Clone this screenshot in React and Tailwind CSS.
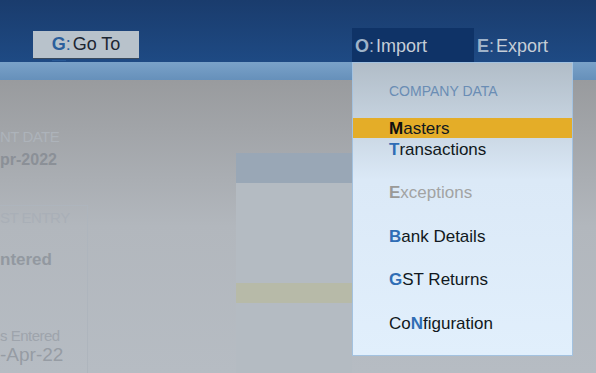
import React from 'react';

const font = { fontFamily: '"Liberation Sans", Arial, sans-serif' };

const Key = ({ k, label, keyClass, labelClass }) => (
    <span className="flex items-baseline">
        <span className={`relative font-bold ${keyClass}`}>
            {k}
            <span className="absolute left-0 right-0 -bottom-[3px] h-px bg-current opacity-70" />
        </span>
        <span className={`${keyClass} mr-[2px]`}>:</span>
        <span className={labelClass}>{label}</span>
    </span>
);

const MenuItem = ({ first, rest, pre, firstClass = 'text-[#2f6db5]', textClass = 'text-[#101820]', active, className = '' }) => (
    <div className={`h-[20px] flex items-center pl-[36px] text-[17px] leading-none ${active ? 'bg-[#e4ad28]' : ''} ${className}`}>
        <span className={textClass}>{pre}</span>
        <span className={`font-bold ${firstClass}`}>{first}</span>
        <span className={textClass}>{rest}</span>
    </div>
);

export default function App() {
    return (
        <div className="relative w-[596px] h-[373px] overflow-hidden flex flex-col" style={font}>
            {/* Top bar */}
            <div className="h-[62px] shrink-0 bg-gradient-to-b from-[#1a3c6d] to-[#1e4a84] flex items-end">
                <div className="ml-[33px] mb-[3px] w-[106px] h-[28px] bg-[#b8c2cb] border-b border-[#3a4a5c] flex items-center justify-center text-[18px]">
                    <Key k="G" label="Go To" keyClass="text-[#2c5f9c]" labelClass="text-[#1c2632]" />
                </div>
                <div className="ml-auto mr-[25px] flex items-end">
                    <div className="w-[122px] h-[34px] bg-[#0f3367] flex items-center pl-[3px] pt-[2px] text-[18px]">
                        <Key k="O" label="Import" keyClass="text-[#9fb3c9]" labelClass="text-[#c6ced7]" />
                    </div>
                    <div className="w-[97px] h-[34px] flex items-center pl-[3px] pt-[2px] text-[18px]">
                        <Key k="E" label="Export" keyClass="text-[#9fb3c9]" labelClass="text-[#c6ced7]" />
                    </div>
                </div>
            </div>

            {/* Sub bar */}
            <div className="h-[18px] shrink-0 bg-gradient-to-b from-[#7aa2c9] to-[#6690ba]" />

            {/* Dimmed dashboard */}
            <div className="flex-1 flex bg-gradient-to-b from-[#999b9e] via-[#b2b7bd] to-[#b6bcc3]">
                <div className="w-[88px] shrink-0 flex flex-col">
                    <div className="w-[56px] mt-[48px] text-right text-[15px] leading-[17px] text-[#adb3ba] tracking-[-0.5px] whitespace-nowrap">NT DATE</div>
                    <div className="w-[56px] mt-[6px] text-right text-[16px] leading-[18px] font-bold text-[#8b9097] whitespace-nowrap">pr-2022</div>
                    <div className="mt-[36px] flex-1 border-t border-r border-[#aeb5bd]">
                        <div className="w-[56px] mt-[4px] text-right text-[15px] leading-[16px] text-[#a9afb7] tracking-[-0.5px] whitespace-nowrap">ST ENTRY</div>
                        <div className="w-[51px] mt-[24px] text-right text-[17px] leading-[19px] font-bold text-[#9298a0] whitespace-nowrap">ntered</div>
                        <div className="w-[52px] mt-[58px] text-right text-[15px] leading-[17px] text-[#9ea4ac] tracking-[-0.5px] whitespace-nowrap">s Entered</div>
                        <div className="w-[56px] mt-[1px] text-right text-[19px] leading-[20px] text-[#969ca4] whitespace-nowrap">-Apr-22</div>
                    </div>
                </div>
                <div className="flex-1" />
                <div className="w-[116px] shrink-0 flex flex-col">
                    <div className="mt-[73px] h-[30px] bg-[#99a7b6]" />
                    <div className="flex-1 bg-[#b4bbc2] flex flex-col">
                        <div className="mt-[100px] h-[20px] bg-[#b7baa8]" />
                    </div>
                </div>
                <div className="w-[244px] shrink-0" />
            </div>

            {/* Import dropdown */}
            <div className="absolute left-[352px] top-[62px] w-[221px] h-[294px] border border-[#a3c2e0] bg-gradient-to-b from-[#b1bdc8] via-[#dbe9f7] via-40% to-[#e1effc] flex flex-col">
                <div className="mt-[21px] pl-[36px] text-[14px] text-[#6a8db4] leading-none">COMPANY DATA</div>
                <div className="mt-[20px]">
                    <MenuItem first="M" rest="asters" firstClass="text-[#101010]" active />
                </div>
                <MenuItem first="T" rest="ransactions" className="mt-[1px]" />
                <MenuItem first="E" rest="xceptions" firstClass="text-[#9a9a98]" textClass="text-[#a2a3a3]" className="mt-[23px]" />
                <MenuItem first="B" rest="ank Details" className="mt-[24px]" />
                <MenuItem first="G" rest="ST Returns" className="mt-[23px]" />
                <MenuItem pre="Co" first="N" rest="figuration" className="mt-[24px]" />
            </div>
        </div>
    );
}
